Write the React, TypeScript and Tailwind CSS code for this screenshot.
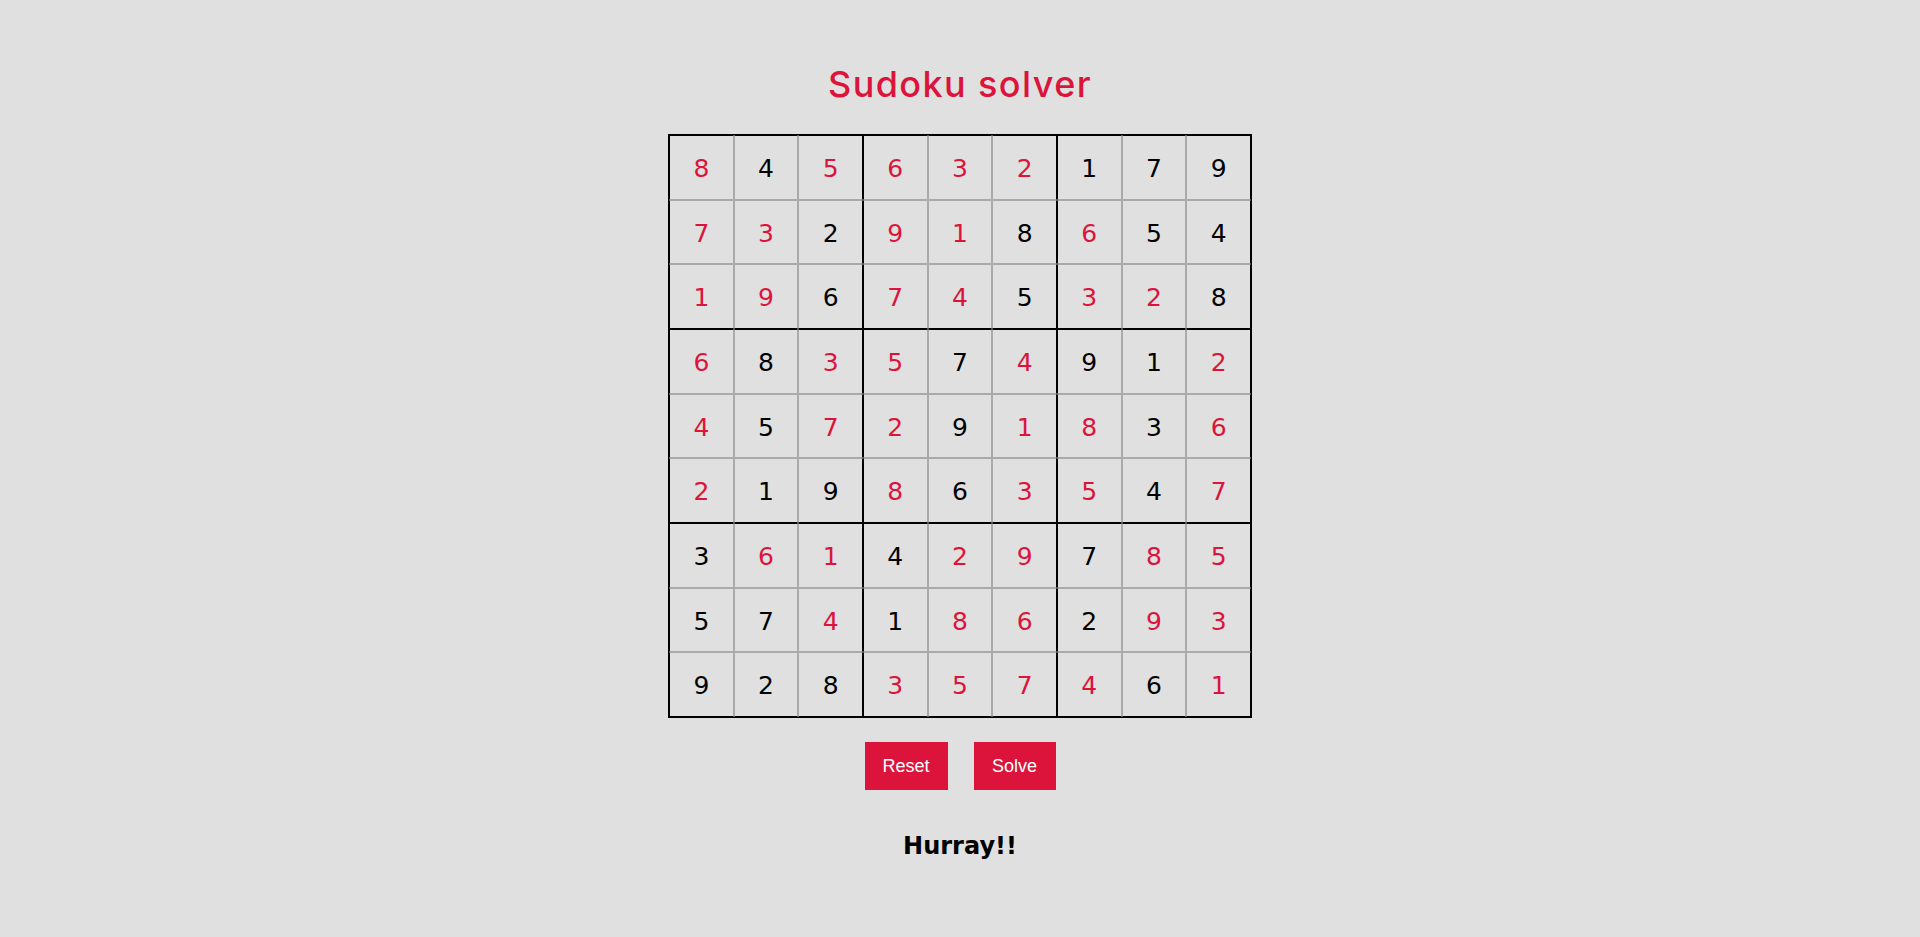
import React from "react";

// board as shown: [value, isComputed]
const board: string[] = [
  "8r 4 5r 6r 3r 2r 1 7 9",
  "7r 3r 2 9r 1r 8 6r 5 4",
  "1r 9r 6 7r 4r 5 3r 2r 8",
  "6r 8 3r 5r 7 4r 9 1 2r",
  "4r 5 7r 2r 9 1r 8r 3 6r",
  "2r 1 9 8r 6 3r 5r 4 7r",
  "3 6r 1r 4 2r 9r 7 8r 5r",
  "5 7 4r 1 8r 6r 2 9r 3r",
  "9 2 8 3r 5r 7r 4r 6 1r",
];

function Cell({ value, r, c }: { value: string; r: number; c: number }) {
  const computed = value.endsWith("r");
  const digit = value.replace("r", "");
  const top = r === 0 || r === 3 || r === 6 ? "border-t-black" : "border-t-[#aaaaaa]";
  const bottom = r === 2 || r === 5 || r === 8 ? "border-b-black" : "border-b-[#aaaaaa]";
  const left = c === 0 || c === 3 || c === 6 ? "border-l-black" : "border-l-[#aaaaaa]";
  const right = c === 2 || c === 5 || c === 8 ? "border-r-black" : "border-r-[#aaaaaa]";
  return (
    <div
      className={`flex h-[64.67px] items-center justify-center border pt-[3px] text-[25px] ${top} ${bottom} ${left} ${right} ${
        computed ? "text-[#dc143c]" : "text-black"
      }`}
    >
      {digit}
    </div>
  );
}

export default function App() {
  return (
    <div
      className="flex min-h-[937px] w-full flex-col items-center bg-[#e0e0e0]"
      style={{ fontFamily: '"DejaVu Sans", sans-serif' }}
    >
      <h1
        className="mt-[66px] text-[36px] font-medium leading-none tracking-[1.4px] text-[#dc143c]"
        style={{ fontFamily: 'Inter, "DejaVu Sans", sans-serif' }}
      >
        Sudoku solver
      </h1>

      <div className="mt-[32px] grid w-[584px] grid-cols-9 border border-black">
        {board.map((row, r) =>
          row.split(" ").map((v, c) => <Cell key={`${r}-${c}`} value={v} r={r} c={c} />)
        )}
      </div>

      <div
        className="mt-[24px] flex gap-[26px]"
        style={{ fontFamily: '"Liberation Sans", Arial, sans-serif' }}
      >
        <button className="h-[48px] w-[83px] bg-[#dc143c] pt-[1px] text-[18px] text-white">Reset</button>
        <button className="h-[48px] w-[82px] bg-[#dc143c] pt-[1px] text-[18px] text-white">Solve</button>
      </div>

      <h2 className="mt-[44px] text-[24px] font-bold leading-none text-black">Hurray!!</h2>
    </div>
  );
}
